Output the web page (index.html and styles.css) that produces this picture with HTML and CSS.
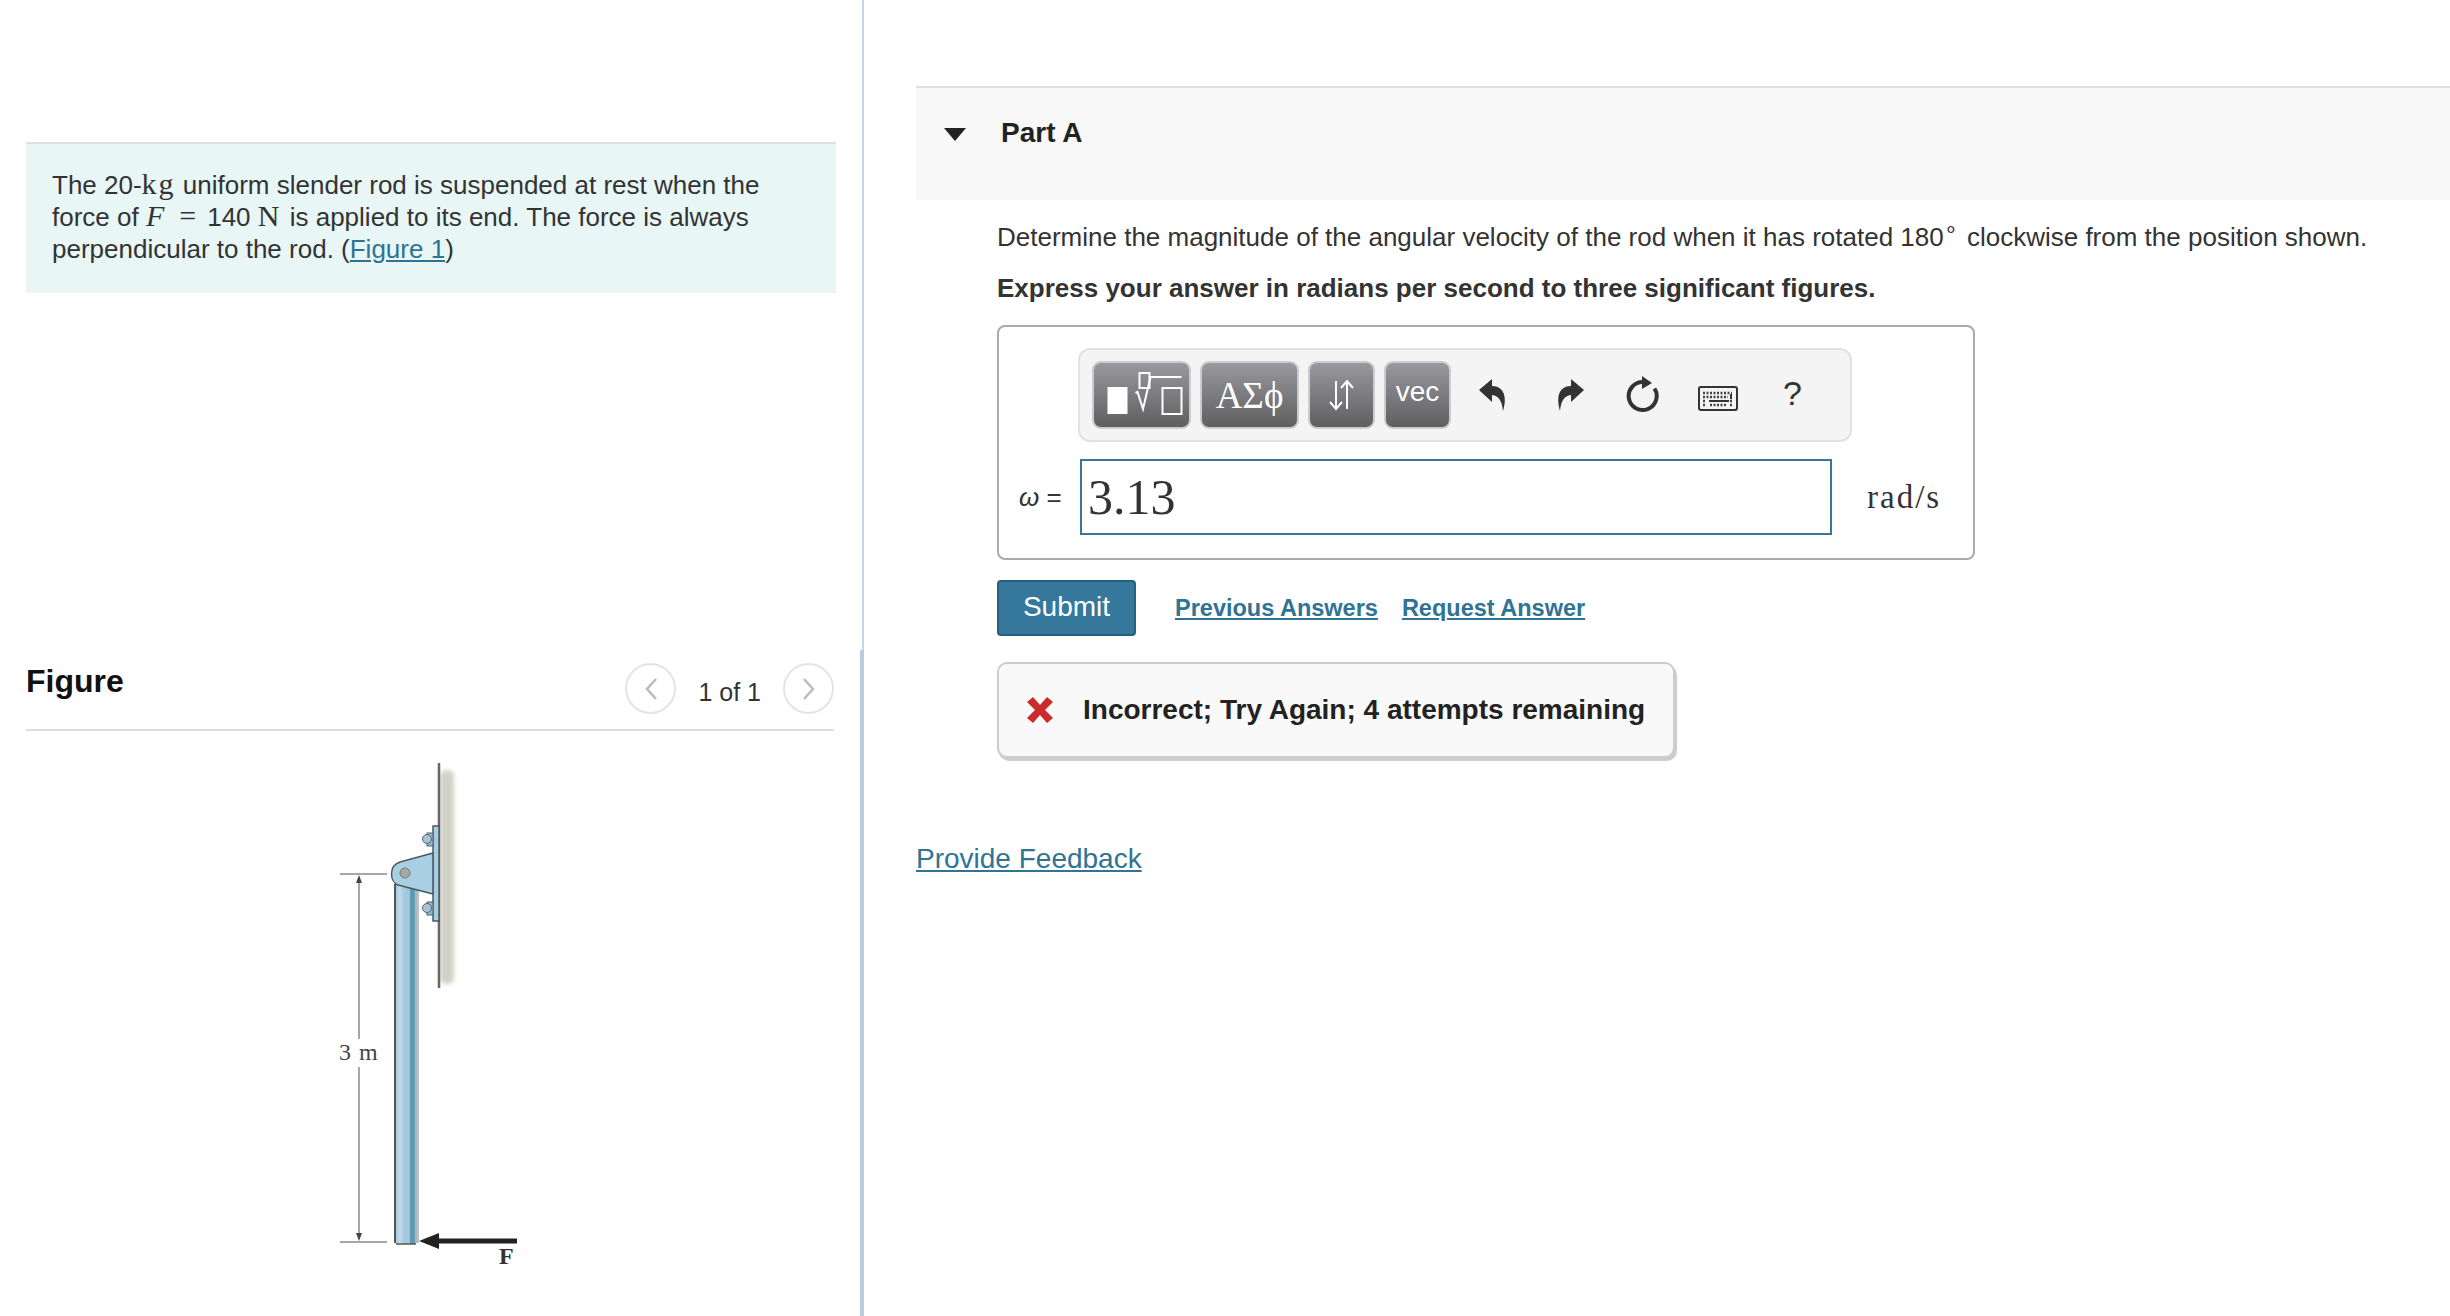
FILE: index.html
```html
<!DOCTYPE html>
<html lang="en">
<head>
    <meta charset="UTF-8">
    <title>Part A</title>
    <link rel="stylesheet" href="styles.css">
</head>
<body>
    <div class="page">
        <div class="left-col">
            <div class="intro">
                <span class="intro-line">The 20-<span class="math math-unit">kg</span> uniform slender rod is suspended at rest when the</span>
                <span class="intro-line">force of <span class="math"><i>F</i></span><span class="math math-eq">=</span>140 <span class="math math-n">N</span> is applied to its end. The force is always</span>
                <span class="intro-line">perpendicular to the rod. (<a href="#">Figure 1</a>)</span>
            </div>

            <div class="figure-head">
                <h2>Figure</h2>
                <div class="pager">
                    <span class="pager-btn">
                        <svg width="14" height="24" viewBox="0 0 14 24"><path d="M12 2 L3 12 L12 22" /></svg>
                    </span>
                    <span class="pager-text">1 of 1</span>
                    <span class="pager-btn">
                        <svg width="14" height="24" viewBox="0 0 14 24"><path d="M2 2 L11 12 L2 22" /></svg>
                    </span>
                </div>
            </div>

            <svg class="figure-img" width="220" height="566" viewBox="320 750 220 566">
                <defs>
                    <linearGradient id="rodFill" x1="0" x2="1" y1="0" y2="0">
                        <stop offset="0" stop-color="#9cc4da" />
                        <stop offset="0.22" stop-color="#c3dce9" />
                        <stop offset="0.4" stop-color="#a6cbe0" />
                        <stop offset="0.66" stop-color="#a0c6db" />
                        <stop offset="0.7" stop-color="#5d9ab4" />
                        <stop offset="0.88" stop-color="#5d9ab4" />
                        <stop offset="0.92" stop-color="#a8b8c0" />
                        <stop offset="1" stop-color="#a8b8c0" />
                    </linearGradient>
                    <filter id="soft"><feGaussianBlur stdDeviation="0.6" /></filter>
                    <filter id="softer" x="-50%" y="-10%" width="200%" height="120%"><feGaussianBlur stdDeviation="2" /></filter>
                </defs>
                <rect x="440" y="770" width="14" height="214" rx="6" fill="#d2d2c6" filter="url(#softer)" />
                <g filter="url(#soft)">
                    <line x1="439" y1="763" x2="439" y2="988" stroke="#666" stroke-width="2.500" />

                    <path d="M395 883 V1242 Q395 1244 398 1244 H415 Q417 1244 417 1242 V888 Z" fill="url(#rodFill)" />
                    <line x1="395" y1="884" x2="395" y2="1243" stroke="#555" stroke-width="2" />
                    <line x1="418" y1="890" x2="418" y2="1243" stroke="#aaa" stroke-width="1.500" />
                    <line x1="396" y1="1244" x2="416" y2="1244" stroke="#555" stroke-width="1.500" />

                    <rect x="433" y="826" width="6" height="95" fill="#a6cde0" stroke="#4a5a64" stroke-width="1.500" />
                    <path d="M433 853 L400 862 C388 866 390 882 398 885 L433 894 Z" fill="#a9cfe2" stroke="#4a5a64" stroke-width="1.500" />
                    <circle cx="405" cy="873" r="5" fill="#a8a8a8" stroke="#777" />

                    <rect x="427" y="833" width="6" height="13" fill="#8fb8cc" stroke="#55656e" />
                    <circle cx="427" cy="839" r="4.500" fill="#a8c4d2" stroke="#55656e" />
                    <rect x="427" y="902" width="6" height="13" fill="#8fb8cc" stroke="#55656e" />
                    <circle cx="427" cy="908" r="4.500" fill="#a8c4d2" stroke="#55656e" />

                    <line x1="340" y1="874" x2="387" y2="874" stroke="#888" stroke-width="1.500" />
                    <line x1="340" y1="1242" x2="387" y2="1242" stroke="#888" stroke-width="1.500" />
                    <line x1="359" y1="880" x2="359" y2="1039" stroke="#888" stroke-width="1.500" />
                    <line x1="359" y1="1067" x2="359" y2="1235" stroke="#888" stroke-width="1.500" />
                    <path d="M359 875 L356 883 H362 Z" fill="#444" />
                    <path d="M359 1241 L356 1233 H362 Z" fill="#444" />

                    <path d="M419 1241 L439 1233 V1238.500 H517 V1243.500 H439 V1249 Z" fill="#222" />
                </g>
                <text class="fig-label" x="339" y="1060">3 m</text>
                <text class="fig-force" x="499" y="1264">F</text>
            </svg>
        </div>

        <div class="right-col">
            <div class="part-head">
                <span class="caret"></span>
                <h3>Part A</h3>
            </div>

            <div class="part-body">
                <p class="question">Determine the magnitude of the angular velocity of the rod when it has rotated 180<sup class="deg">&#8728;</sup> clockwise from the position shown.</p>
                <p class="instruction">Express your answer in radians per second to three significant figures.</p>

                <div class="answer-box">
                    <div class="toolbar">
                        <span class="tool-btn tool-wide">
                            <svg width="84" height="56" viewBox="0 0 84 56">
                                <rect class="ico-solid" x="7.500" y="20" width="20" height="27" />
                                <rect class="ico-line" x="39.500" y="6" width="10" height="15" />
                                <path class="ico-line" d="M35.500 26 L37.500 25 L43 42 L50.500 10 H81.500" />
                                <rect class="ico-line" x="62.500" y="21" width="19" height="26" />
                            </svg>
                        </span>
                        <span class="tool-btn tool-wide tool-serif">&Alpha;&Sigma;&#981;</span>
                        <span class="tool-btn tool-narrow">
                            <svg width="30" height="36" viewBox="0 0 30 36">
                                <path class="ico-line" d="M9 4 V32 M3 25 L9 32 L15 25 M20 32 V4 M14 11 L20 4 L26 11" />
                            </svg>
                        </span>
                        <span class="tool-btn tool-narrow tool-vec">vec</span>

                        <svg class="tool-icon icon-undo" width="28" height="32" viewBox="0 0 28 32">
                            <path d="M0 11 L13 0 V7 C23 7 29 15 24 32 C23 22 20 17 13 16 V23 Z" />
                        </svg>
                        <svg class="tool-icon icon-redo" width="28" height="32" viewBox="0 0 28 32">
                            <path d="M0 11 L13 0 V7 C23 7 29 15 24 32 C23 22 20 17 13 16 V23 Z" />
                        </svg>
                        <svg class="tool-icon icon-reload" width="34" height="38" viewBox="0 0 34 38">
                            <path class="reload-arc" d="M28.500 12.500 A14 14 0 1 1 17 6" />
                            <path d="M16 0 L26 7 L16 13 Z" />
                        </svg>
                        <svg class="tool-icon icon-keys" width="40" height="25" viewBox="0 0 40 25">
                            <rect class="keys-frame" x="1" y="1" width="38" height="23" rx="2" />
                            <path class="keys-row" d="M5 7 H34 M5 11 H30 M5 15 H8 M32 15 H35 M12 19 H29 M5 19 H8 M32 19 H35" />
                            <path class="keys-solid" d="M11 15 H31 M33 8 V13" />
                        </svg>
                        <span class="tool-help">?</span>
                    </div>

                    <div class="answer-row">
                        <span class="answer-label"><i>&omega;</i> =</span>
                        <div class="answer-input">3.13</div>
                        <span class="answer-unit">rad/s</span>
                    </div>
                </div>

                <div class="action-row">
                    <button class="submit-btn">Submit</button>
                    <a class="action-link" href="#">Previous Answers</a>
                    <a class="action-link" href="#">Request Answer</a>
                </div>

                <div class="feedback">
                    <svg width="28" height="26" viewBox="0 0 28 26">
                        <path d="M1 5 L7 0 L14 8 L21 0 L27 5 L19 13 L27 21 L21 26 L14 18 L7 26 L1 21 L9 13 Z" />
                    </svg>
                    <span>Incorrect; Try Again; 4 attempts remaining</span>
                </div>
            </div>

            <a class="provide" href="#">Provide Feedback</a>
        </div>
    </div>
</body>
</html>
```

FILE: styles.css
```css
body {
    font-family: 'Liberation Sans', Arial, sans-serif;
    margin: 0;
    padding: 0;
    color: #333;
    background-color: white;
    overflow: hidden;
}

a {
    color: #2f7395;
}

.page {
    display: flex;
    height: 1316px;
}

/* left side */
.left-col {
    position: relative;
    width: 864px;
    flex-shrink: 0;
    box-sizing: border-box;
    padding-top: 142px;
    border-right: 2px solid #c3d3e2;
    display: flex;
    flex-direction: column;
}

.left-col::after {
    content: '';
    position: absolute;
    top: 650px;
    bottom: 0;
    right: -2px;
    width: 4px;
    background-color: #bccddd;
}

.intro {
    width: 810px;
    height: 151px;
    box-sizing: border-box;
    margin-left: 26px;
    padding: 25px 26px 0;
    background-color: #e8f6f6;
    border-top: 2px solid #e0e0e0;
    font-size: 26px;
    line-height: 32px;
}

.intro-line {
    display: block;
    height: 32px;
    white-space: nowrap;
}

.math {
    font-family: 'Liberation Serif', serif;
    font-size: 30px;
    line-height: 20px;
}

.math-unit {
    letter-spacing: 2px;
}

.math-eq {
    margin: 0 11px 0 15px;
}

.math-n {
    margin-right: 3px;
}

.figure-head {
    display: flex;
    align-items: flex-start;
    justify-content: space-between;
    width: 808px;
    height: 68px;
    box-sizing: border-box;
    margin: 370px 0 0 26px;
    border-bottom: 2px solid #ddd;
}

.figure-head h2 {
    margin: 0;
    font-size: 32px;
    color: #111;
}

.pager {
    display: flex;
    align-items: center;
}

.pager-btn {
    display: flex;
    align-items: center;
    justify-content: center;
    width: 47px;
    height: 47px;
    border: 2px solid #e4e4e4;
    border-radius: 50%;
}

.pager-btn svg path {
    fill: none;
    stroke: #bbb;
    stroke-width: 2.500;
}

.pager-text {
    margin: 7px 22px 0;
    font-size: 25px;
}

.figure-img {
    margin-left: 320px;
    margin-top: 19px;
}

.fig-label {
    font-family: 'Liberation Serif', serif;
    font-size: 24px;
    letter-spacing: 1px;
    fill: #444;
}

.fig-force {
    font-family: 'Liberation Serif', serif;
    font-size: 24px;
    font-weight: bold;
    fill: #333;
}

/* right side */
.right-col {
    flex: 1;
    min-width: 0;
    padding-left: 52px;
    padding-top: 86px;
}

.part-head {
    display: flex;
    align-items: flex-start;
    height: 114px;
    box-sizing: border-box;
    padding: 28px 0 0 28px;
    background-color: #f8f8f8;
    border-top: 2px solid #e0e0e0;
}

.caret {
    width: 0;
    height: 0;
    margin-top: 12px;
    border-left: 11px solid transparent;
    border-right: 11px solid transparent;
    border-top: 13px solid #222;
}

.part-head h3 {
    margin: 0 0 0 35px;
    font-size: 28px;
    line-height: 34px;
    color: #222;
}

.part-body {
    padding-left: 81px;
}

.question {
    margin: 20px 0 0;
    font-size: 26px;
    line-height: 34px;
}

.deg {
    font-size: 22px;
    line-height: 0;
    margin-right: 2px;
}

.instruction {
    margin: 17px 0 0;
    font-size: 26px;
    font-weight: bold;
    line-height: 34px;
}

.answer-box {
    width: 978px;
    height: 235px;
    box-sizing: border-box;
    margin-top: 20px;
    padding: 21px 0 0 20px;
    border: 2px solid #aaa;
    border-radius: 8px;
}

.toolbar {
    display: flex;
    align-items: center;
    width: 774px;
    height: 94px;
    box-sizing: border-box;
    margin-left: 59px;
    padding-left: 12px;
    background-color: #f4f4f4;
    border: 2px solid #e2e2e2;
    border-radius: 12px;
}

.tool-btn {
    display: flex;
    align-items: center;
    justify-content: center;
    height: 68px;
    box-sizing: border-box;
    margin-right: 9px;
    background: linear-gradient(#99989e, #5f5f60);
    border: 2px solid #ccc;
    border-radius: 9px;
    color: white;
}

.tool-wide {
    width: 99px;
}

.tool-narrow {
    width: 67px;
}

.tool-serif {
    font-family: 'Liberation Serif', serif;
    font-size: 37px;
}

.tool-vec {
    font-size: 28px;
    padding-bottom: 6px;
}

.ico-solid {
    fill: white;
}

.ico-line {
    fill: none;
    stroke: white;
    stroke-width: 2;
}

.tool-icon {
    fill: #333;
}

.icon-undo {
    margin-left: 19px;
}

.icon-redo {
    margin-left: 49px;
    transform: scaleX(-1);
}

.icon-reload {
    margin-left: 42px;
}

.reload-arc {
    fill: none;
    stroke: #333;
    stroke-width: 4;
}

.icon-keys {
    margin-left: 38px;
    margin-top: 6px;
}

.keys-frame {
    fill: none;
    stroke: #333;
    stroke-width: 2;
}

.keys-row {
    fill: none;
    stroke: #444;
    stroke-width: 2.500;
    stroke-dasharray: 2 1.500;
}

.keys-solid {
    fill: none;
    stroke: #333;
    stroke-width: 2;
}

.tool-help {
    margin-left: 45px;
    font-size: 34px;
    line-height: 34px;
    margin-top: -4px;
}

.answer-row {
    display: flex;
    align-items: center;
    margin-top: 17px;
}

.answer-label {
    width: 61px;
    font-size: 26px;
    white-space: nowrap;
}

.answer-input {
    width: 752px;
    height: 76px;
    box-sizing: border-box;
    padding-left: 6px;
    border: 2px solid #36769a;
    font-family: 'Liberation Serif', serif;
    font-size: 50px;
    line-height: 72px;
}

.answer-unit {
    margin-left: 35px;
    font-family: 'Liberation Serif', serif;
    font-size: 33px;
    letter-spacing: 2px;
}

.action-row {
    display: flex;
    align-items: center;
    margin-top: 20px;
}

.submit-btn {
    width: 139px;
    height: 56px;
    padding: 0 0 2px;
    background-color: #36789c;
    border: 2px solid #24607f;
    border-radius: 4px;
    color: white;
    font-family: inherit;
    font-size: 28px;
}

.action-link {
    margin-left: 24px;
    font-size: 23.500px;
    font-weight: bold;
}

.submit-btn + .action-link {
    margin-left: 39px;
}

.feedback {
    display: flex;
    align-items: center;
    width: 678px;
    height: 96px;
    box-sizing: border-box;
    margin-top: 26px;
    padding-left: 27px;
    background-color: #f9f9f9;
    border: 2px solid #ccc;
    border-radius: 10px;
    box-shadow: 2px 3px 1px #ccc;
    font-size: 28px;
    font-weight: bold;
    color: #222;
}

.feedback svg {
    margin-right: 29px;
    fill: #cc2a2c;
}

.provide {
    display: inline-block;
    margin-top: 85px;
    font-size: 28px;
}
```
